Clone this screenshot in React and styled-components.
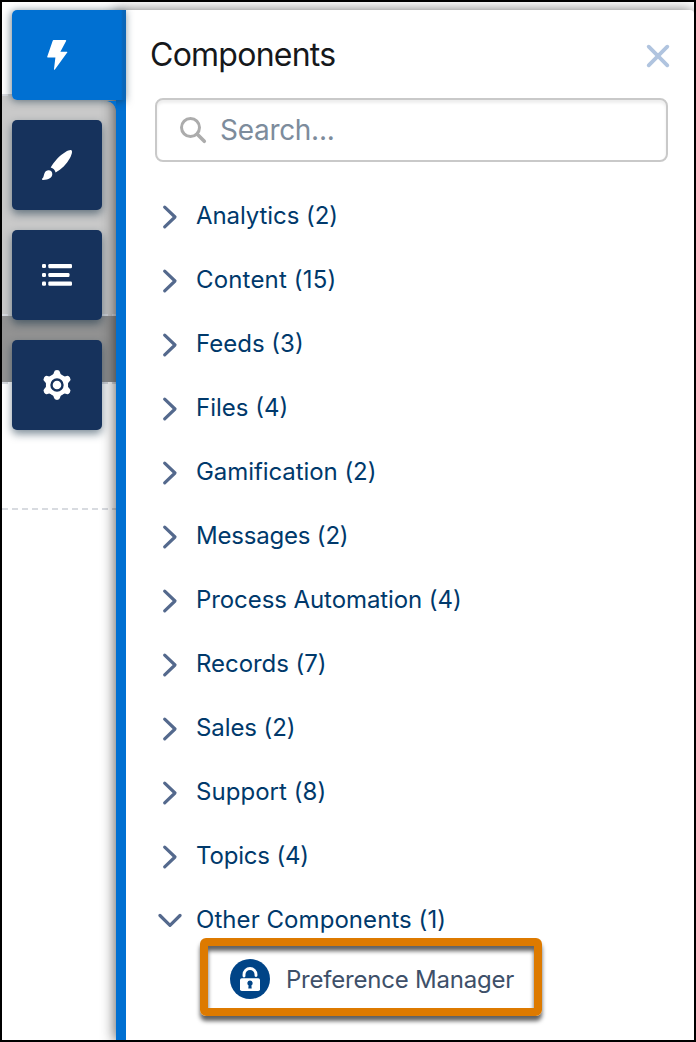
import React from 'react';
import styled, { createGlobalStyle } from 'styled-components';

const GlobalStyle = createGlobalStyle`
  * {
    box-sizing: border-box;
  }

  body {
    margin: 0;
    background: #fff;
    font-family: Inter, 'Liberation Sans', sans-serif;
  }
`;

const Frame = styled.div`
  display: flex;
  width: 696px;
  height: 1042px;
  border: 2px solid #000;
  background: #fff;
  overflow: hidden;
`;

const Side = styled.div`
  position: relative;
  width: 114px;
  flex: none;
`;

const Strip = styled.div`
  height: ${props => props.height}px;
  background: ${props => props.color || '#fff'};
`;

const Dashes = styled.div`
  height: 2px;
  background: repeating-linear-gradient(to right, #d8dbe0 0 6px, ${props => props.gap || '#fff'} 6px 10px);
`;

// sits on top of the page canvas
const Tabs = styled.nav`
  position: absolute;
  z-index: 2;
  top: 8px;
  left: 10px;
  display: flex;
  flex-direction: column;
  gap: 20px;
`;

const Tab = styled.button`
  display: flex;
  align-items: center;
  justify-content: center;
  width: 90px;
  height: 90px;
  padding: 0;
  border: 0;
  border-radius: 5px;
  background: #16325c;
  color: #fff;
  box-shadow: 0 4px 8px rgba(22, 50, 70, 0.55);
`;

const ActiveTab = styled(Tab)`
  width: 114px;
  padding-right: 24px;
  border-radius: 5px 0 0 5px;
  background: linear-gradient(to right, #0070d2 109px, #0a66b8 111px);
  box-shadow: -1px 1px 9px rgba(22, 50, 70, 0.6);
`;

const Corner = styled.div`
  position: absolute;
  z-index: 2;
  top: 99px;
  right: 0;
  width: 10px;
  height: 10px;
  background: radial-gradient(circle at 0 100%, transparent 9.5px, #0070d2 10.2px);
`;

const Panel = styled.section`
  position: relative;
  flex: 1;
  margin-top: 8px;
  padding: 20px 26px 0 29px;
  border-left: 10px solid #0070d2;
  border-top-right-radius: 4px;
  background: #fff;
  box-shadow: -1px 1px 14px rgba(0, 0, 0, 0.62);
`;

const PanelHeader = styled.header`
  display: flex;
  align-items: center;
  justify-content: space-between;
  height: 50px;
  margin-left: -5px;
`;

const Title = styled.h2`
  margin: 0;
  color: #16181b;
  font-size: 32px;
  font-weight: 400;
  line-height: 50px;
  letter-spacing: -0.75px;
`;

const Close = styled.button`
  display: flex;
  padding: 0;
  margin-top: 2px;
  margin-right: -2px;
  border: 0;
  background: none;
  color: #b0c4df;
`;

const SearchBox = styled.div`
  display: flex;
  align-items: center;
  gap: 13px;
  height: 64px;
  margin-top: 18px;
  padding-left: 23px;
  border: 2px solid #c9c9c9;
  border-radius: 8px;
  box-shadow: inset 0 3px 3px rgba(0, 0, 0, 0.07);
  color: #7d8c9c;
  font-size: 28px;
`;

const List = styled.ul`
  margin: 22px 0 0;
  padding: 0;
  list-style: none;
`;

const Row = styled.li`
  display: flex;
  align-items: center;
  height: 64px;
  color: #00396b;
  font-size: 24px;
  line-height: 64px;
  white-space: nowrap;
`;

const Arrow = styled.svg`
  flex: none;
  width: 26px;
  height: 26px;
  margin: 2px 14px 0 1px;
  fill: none;
  stroke: #54698d;
  stroke-width: 3.2;
  stroke-linecap: round;
  stroke-linejoin: round;
`;

const Label = styled.span`
  letter-spacing: ${props => props.$spacing || 0}px;
`;

const Item = styled.div`
  display: flex;
  align-items: center;
  gap: 16px;
  width: 342px;
  height: 78px;
  margin: -14px 0 0 45px;
  padding: 4px 0 0 22px;
  border: 8px solid #dd7a00;
  border-radius: 6px;
  color: #3e5069;
  font-size: 24px;
  white-space: nowrap;
  box-shadow: 0 5px 4px rgba(0, 0, 0, 0.62), inset 0 5px 4px rgba(0, 0, 0, 0.62);
`;

const Badge = styled.span`
  display: flex;
  align-items: center;
  justify-content: center;
  width: 40px;
  height: 40px;
  border-radius: 50%;
  background: #004487;
`;

const groups = [
  { name: 'Analytics', count: 2, spacing: -0.08 },
  { name: 'Content', count: 15, spacing: 0.17 },
  { name: 'Feeds', count: 3 },
  { name: 'Files', count: 4 },
  { name: 'Gamification', count: 2, spacing: -0.07 },
  { name: 'Messages', count: 2, spacing: -0.2 },
  { name: 'Process Automation', count: 4, spacing: -0.08 },
  { name: 'Records', count: 7, spacing: -0.05 },
  { name: 'Sales', count: 2, spacing: -0.1 },
  { name: 'Support', count: 8, spacing: 0.05 },
  { name: 'Topics', count: 4, spacing: -0.18 },
  { name: 'Other Components', count: 1, spacing: 0.06, open: true },
];

const BoltIcon = () => (
  <svg width="30" height="30" viewBox="0 0 30 30" fill="currentColor">
    <path d="M11.6 0.1h12q.9 0 .5.8L18.4 11.700h6.400q1 0 .4.900L12.900 29.600q-1 .7-.9-.5l1.400-11.700H5.800q-.9 0-.5-.8L10.700.8q.2-.7.900-.7z" />
  </svg>
);

const BrushIcon = () => (
  <svg width="30" height="30" viewBox="0 0 30 30" fill="currentColor">
    <path d="M29.600.400c1 1 .1 4.200-1.600 7.500-3.500 6.300-8.500 11.200-14.400 14.600-.6-2.400-2.400-4.200-4.900-4.900C12.200 11.500 17.500 5.500 23.500 2c2.800-1.600 5.200-2.400 6.100-1.600z" />
    <path d="M6.600 20.300c2.200 0 3.700 1.500 3.700 3.700 0 3.600-3.800 6-9.600 5.900-.7-.1-.9-.8-.4-1.300 1.600-1.500 1.200-3 2.100-5.200.8-2 2.300-3.100 4.200-3.100z" />
  </svg>
);

const ListIcon = () => (
  <svg width="30" height="22" viewBox="0 0 30 22" fill="currentColor">
    <rect width="4" height="4" rx="1.300" />
    <rect x="6.300" width="23.700" height="4.200" rx="1.200" />
    <rect y="9" width="4" height="4" rx="1.300" />
    <rect x="6.300" y="9" width="21.200" height="4" rx="1.200" />
    <rect y="17.500" width="4" height="4.200" rx="1.300" />
    <rect x="6.300" y="17.500" width="23.700" height="4.200" rx="1.200" />
  </svg>
);

const GearIcon = () => (
  <svg width="30" height="30" viewBox="0 0 30 30">
    <g fill="#fff">
      <circle cx="15" cy="15" r="11.100" />
      {[0, 60, 120, 180, 240, 300].map(angle => (
        <path
          key={angle}
          transform={`rotate(${angle} 15 15)`}
          d="M9.600 5.600Q11.800 4.600 12 2.200Q12.300 0.100 15 0.100Q17.700 0.100 18 2.200Q18.200 4.600 20.400 5.600L15 12z"
        />
      ))}
    </g>
    <circle cx="15" cy="15" r="5.500" fill="#fff" stroke="#16325c" strokeWidth="2.400" />
  </svg>
);

const SearchIcon = () => (
  <svg width="27" height="27" viewBox="0 0 27 27" fill="none" stroke="#acacac">
    <circle cx="10.500" cy="10.500" r="9" strokeWidth="3" />
    <path d="M17.300 17.300l7 7" strokeWidth="3.600" strokeLinecap="round" />
  </svg>
);

const CloseIcon = () => (
  <svg width="24" height="24" viewBox="0 0 24 24" fill="none" stroke="currentColor">
    <path d="M2.700 2.700l18.600 18.600M21.300 2.700l-18.600 18.600" strokeWidth="3.800" strokeLinecap="round" />
  </svg>
);

const LockIcon = () => (
  <svg width="20" height="24" viewBox="0 0 20 24">
    <path d="M4 9V7.500a6 6 0 0 1 12 0V8.600" fill="none" stroke="#fff" strokeWidth="2.900" strokeLinecap="round" />
    <rect y="11.200" width="20" height="12.800" rx="1.800" fill="#fff" />
    <path d="M10 13.600a2.700 2.700 0 0 1 1.400 5l.3 3H8.300l.3-3A2.700 2.700 0 0 1 10 13.600z" fill="#004487" />
  </svg>
);

export default function App() {
  return (
    <>
      <GlobalStyle />
      <Frame>
        <Side>
          <Strip height={92} />
          <Dashes gap="#c9c9c9" />
          <Strip height={218} color="#c9c9c9" />
          <Dashes gap="#c9c9c9" />
          <Strip height={66} color="#929292" />
          <Dashes />
          <Strip height={124} />
          <Dashes />
          <Tabs>
            <ActiveTab aria-label="Components">
              <BoltIcon />
            </ActiveTab>
            <Tab aria-label="Theme">
              <BrushIcon />
            </Tab>
            <Tab aria-label="Page Structure">
              <ListIcon />
            </Tab>
            <Tab aria-label="Settings">
              <GearIcon />
            </Tab>
          </Tabs>
          <Corner />
        </Side>
        <Panel>
          <PanelHeader>
            <Title>Components</Title>
            <Close aria-label="Close">
              <CloseIcon />
            </Close>
          </PanelHeader>
          <SearchBox>
            <SearchIcon />
            <Label $spacing={-0.3}>Search...</Label>
          </SearchBox>
          <List>
            {groups.map(({ name, count, open, spacing }) => (
              <Row key={name}>
                <Arrow viewBox="0 0 26 26">
                  <path d={open ? 'M4 7.500l10 9.900l10-9.900' : 'M8.700 3.200L19 13L8.700 22.800'} />
                </Arrow>
                <Label $spacing={spacing}>
                  {name} ({count})
                </Label>
              </Row>
            ))}
          </List>
          <Item>
            <Badge>
              <LockIcon />
            </Badge>
            <Label $spacing={-0.22}>Preference Manager</Label>
          </Item>
        </Panel>
      </Frame>
    </>
  );
}
